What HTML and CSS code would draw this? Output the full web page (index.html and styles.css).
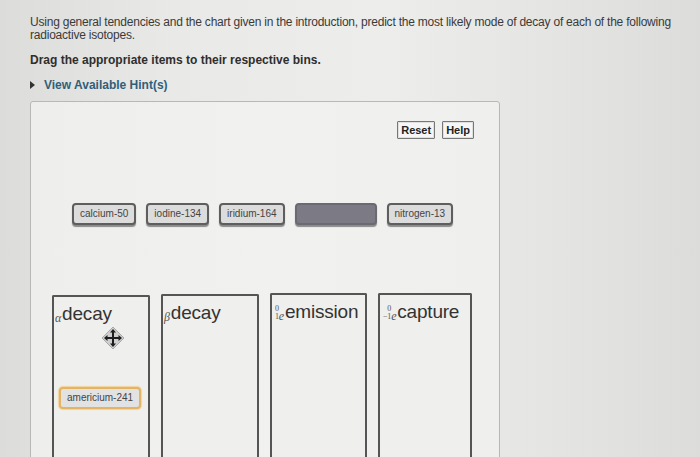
FILE: index.html
```html
<!DOCTYPE html>
<html>
<head>
<meta charset="utf-8">
<link rel="stylesheet" href="styles.css">
</head>
<body>
<div class="page">
  <p class="intro">Using general tendencies and the chart given in the introduction, predict the most likely mode of decay of each of the following radioactive isotopes.</p>
  <p class="instr">Drag the appropriate items to their respective bins.</p>
  <div class="hint"><span class="tri"></span>View Available Hint(s)</div>
  <div class="panel">
    <div class="tools">
      <span class="btn">Reset</span>
      <span class="btn">Help</span>
    </div>
    <div class="tokens">
      <span class="tok">calcium-50</span>
      <span class="tok">iodine-134</span>
      <span class="tok">iridium-164</span>
      <span class="tok slot"></span>
      <span class="tok">nitrogen-13</span>
    </div>
    <div class="bins">
      <div class="bin b1">
        <div class="lab"><span class="sym">α</span>decay</div>
        <div class="cursor">
          <svg width="26" height="26" viewBox="0 0 26 26">
            <path d="M13 2 L24 13 L13 24 L2 13 Z" fill="#cfcfcf" stroke="#9a9a9a" stroke-width="0.8"/>
            <path d="M13 4 L10 7.5 H12 V12 H7.5 V10 L4 13 L7.5 16 V14 H12 V18.5 H10 L13 22 L16 18.5 H14 V14 H18.5 V16 L22 13 L18.5 10 V12 H14 V7.5 H16 Z" fill="#1e1e1e"/>
          </svg>
        </div>
        <span class="tok placed">americium-241</span>
      </div>
      <div class="bin b2">
        <div class="lab"><span class="sym">β</span>decay</div>
      </div>
      <div class="bin b3">
        <div class="lab"><span class="nuc"><span>0</span><span>1</span></span><span class="sym e">e</span>emission</div>
      </div>
      <div class="bin b4">
        <div class="lab"><span class="nuc"><span>0</span><span>−1</span></span><span class="sym e">e</span>capture</div>
      </div>
    </div>
  </div>
</div>
</body>
</html>
```
FILE: styles.css
```css
html, body {
  margin: 0;
  padding: 0;
  height: 100%;
  overflow: hidden;
}
body {
  background: linear-gradient(90deg, #dcdcda 0%, #e9e9e7 25%, #ededeb 55%, #e4e4e2 80%, #dcdcda 100%);
  font-family: "Liberation Sans", Arial, sans-serif;
  color: #333;
}
.page {
  padding: 16px 0 0 30px;
}
.intro {
  margin: 0;
  font-size: 12px;
  line-height: 13px;
  width: 662px;
  letter-spacing: -0.22px;
  color: #3a3a3a;
}
.instr {
  margin: 11px 0 0;
  font-size: 12px;
  font-weight: bold;
  line-height: 14px;
  color: #2e2e2e;
}
.hint {
  margin-top: 11px;
  font-size: 12px;
  font-weight: bold;
  color: #2f5f7a;
  display: flex;
  align-items: center;
  line-height: 14px;
}
.tri {
  width: 0;
  height: 0;
  border-left: 5px solid #333;
  border-top: 4px solid transparent;
  border-bottom: 4px solid transparent;
  margin: 0 9px 0 0;
}
.panel {
  margin-top: 9px;
  width: 470px;
  height: 360px;
  border: 1px solid #b8b8b6;
  border-radius: 3px 3px 0 0;
  background: linear-gradient(90deg, #eeeeec, #f1f2f0 50%, #efefed);
  box-sizing: border-box;
  padding: 19px 25px 0 0;
}
.tools {
  display: flex;
  justify-content: flex-end;
  gap: 7px;
}
.btn {
  font-size: 11px;
  font-weight: bold;
  color: #222;
  border: 1px solid #777;
  border-radius: 1px;
  background: #f6f6f6;
  padding: 2px 3px;
  line-height: 12px;
  box-shadow: 0 0 0 1px #e0e0e0 inset;
}
.tokens {
  display: flex;
  gap: 10px;
  margin: 64px 0 0 41px;
}
.tok {
  font-size: 10px;
  color: #444;
  background: #dcdcdc;
  border: 2px solid #5e5e5e;
  border-radius: 4px;
  padding: 0 6px;
  height: 18px;
  line-height: 18px;
  box-shadow: 0 2px 1px #8a8a8a;
  white-space: nowrap;
}
.slot {
  width: 66px;
  background: #7b7a85;
  border-color: #6a6a72;
}
.bins {
  display: flex;
  gap: 11px;
  margin: 70px 0 0 21px;
  align-items: flex-start;
}
.bin {
  border: 2px solid #555;
  border-bottom: none;
  border-radius: 2px 2px 0 0;
  height: 170px;
  box-sizing: border-box;
  background: #efefed;
}
.b1 { width: 98px; }
.b2 { width: 98px; margin-top: -1px; }
.b3 { width: 97px; margin-top: -2px; }
.b4 { width: 94px; margin-top: -2px; }
.lab {
  font-size: 19px;
  color: #333;
  line-height: 22px;
  padding: 6px 0 0 1px;
  display: flex;
  align-items: flex-end;
  letter-spacing: -0.2px;
}
.sym {
  font-family: "Liberation Serif", serif;
  font-style: italic;
  font-size: 12px;
  line-height: 14px;
  color: #555;
  margin-right: 1px;
}
.e { margin-right: 1px; }
.nuc {
  display: inline-flex;
  flex-direction: column;
  align-items: flex-end;
  font-family: "Liberation Serif", serif;
  font-size: 8px;
  line-height: 8px;
  color: #555;
  margin-bottom: 2px;
  margin-left: 2px;
}
.cursor {
  margin: 0 0 0 46px;
  height: 26px;
}
.placed {
  display: inline-block;
  margin: 36px 0 0 5px;
  border: 2px solid #e3b463;
  box-shadow: 0 0 1px 1px #f1d29a;
  background: #e2e2e2;
  color: #444;
}
```
